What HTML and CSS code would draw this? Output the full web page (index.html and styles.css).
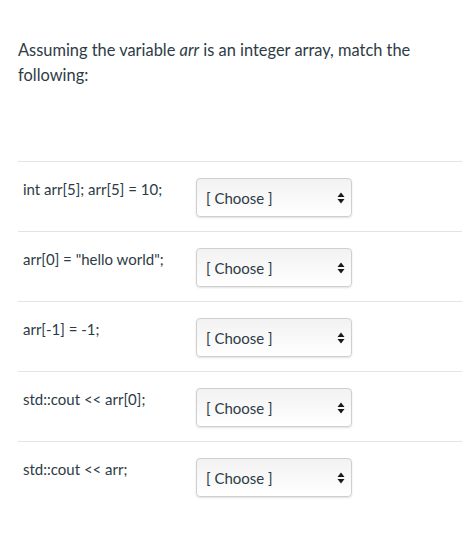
FILE: index.html
```html
<!DOCTYPE html>
<html>
<head>
<meta charset="utf-8">
<link rel="stylesheet" href="styles.css">
</head>
<body>
<div class="question">
  <p class="prompt">Assuming the variable <em>arr</em> is an integer array, match the following:</p>
  <div class="answers">
    <div class="row">
      <div class="label">int arr[5]; arr[5] = 10;</div>
      <div class="select"><span>[ Choose ]</span><svg class="arrows" width="8" height="12" viewBox="0 0 8 12"><path d="M4 0.5 L7.5 5 H0.5 Z M4 11.5 L7.5 7 H0.5 Z" fill="#1a1a1a"/></svg></div>
    </div>
    <div class="row">
      <div class="label">arr[0] = "hello world";</div>
      <div class="select"><span>[ Choose ]</span><svg class="arrows" width="8" height="12" viewBox="0 0 8 12"><path d="M4 0.5 L7.5 5 H0.5 Z M4 11.5 L7.5 7 H0.5 Z" fill="#1a1a1a"/></svg></div>
    </div>
    <div class="row">
      <div class="label">arr[-1] = -1;</div>
      <div class="select"><span>[ Choose ]</span><svg class="arrows" width="8" height="12" viewBox="0 0 8 12"><path d="M4 0.5 L7.5 5 H0.5 Z M4 11.5 L7.5 7 H0.5 Z" fill="#1a1a1a"/></svg></div>
    </div>
    <div class="row">
      <div class="label">std::cout &lt;&lt; arr[0];</div>
      <div class="select"><span>[ Choose ]</span><svg class="arrows" width="8" height="12" viewBox="0 0 8 12"><path d="M4 0.5 L7.5 5 H0.5 Z M4 11.5 L7.5 7 H0.5 Z" fill="#1a1a1a"/></svg></div>
    </div>
    <div class="row">
      <div class="label">std::cout &lt;&lt; arr;</div>
      <div class="select"><span>[ Choose ]</span><svg class="arrows" width="8" height="12" viewBox="0 0 8 12"><path d="M4 0.5 L7.5 5 H0.5 Z M4 11.5 L7.5 7 H0.5 Z" fill="#1a1a1a"/></svg></div>
    </div>
  </div>
</div>
</body>
</html>
```
FILE: styles.css
```css
html, body {
  margin: 0;
  padding: 0;
  background: #fff;
}
body {
  font-family: Lato, "Liberation Sans", sans-serif;
  color: #2d3b45;
}
.question {
  padding: 37px 12px 0 18px;
}
.prompt {
  margin: 0;
  font-size: 16.4px;
  line-height: 25px;
}
.answers {
  margin-top: 74px;
}
.row {
  border-top: 1px solid #e3e3e3;
  height: 70px;
  box-sizing: border-box;
  padding-top: 16px;
  display: flex;
  align-items: flex-start;
}
.label {
  width: 173px;
  padding-left: 5px;
  font-size: 15px;
  line-height: 20px;
  padding-top: 1px;
}
.select {
  width: 156px;
  height: 39px;
  box-sizing: border-box;
  border: 1px solid #cfcfcf;
  border-radius: 4px;
  background: linear-gradient(#f2f2f2, #ffffff);
  box-shadow: 0 1px 2px rgba(0,0,0,0.12);
  display: flex;
  align-items: center;
  justify-content: space-between;
  padding: 0 6px 0 9px;
  font-size: 15px;
  color: #2d3b45;
}
.arrows {
  display: block;
}
```
